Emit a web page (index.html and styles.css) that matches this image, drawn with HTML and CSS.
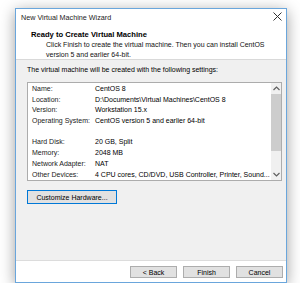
FILE: index.html
```html
<!DOCTYPE html>
<html lang="en">
<head>
	<meta charset="UTF-8">
	<title>New Virtual Machine Wizard</title>
	<link rel="stylesheet" href="styles.css">
</head>
<body>
	<div class="wizard">
		<div class="titlebar">
			<span class="title">New Virtual Machine Wizard</span>
			<svg class="close" width="9" height="9" viewBox="0 0 9 9">
				<path d="M0.5 0.5 L8.5 8.5 M8.5 0.5 L0.5 8.5" stroke="#333" stroke-width="1" fill="none"/>
			</svg>
		</div>

		<div class="header">
			<div class="heading">Ready to Create Virtual Machine</div>
			<div class="desc">Click Finish to create the virtual machine. Then you can install CentOS<br>version 5 and earlier 64-bit.</div>
		</div>

		<div class="content">
			<p class="intro">The virtual machine will be created with the following settings:</p>

			<div class="summary">
				<div class="rows">
					<div class="row"><span class="label">Name:</span><span>CentOS 8</span></div>
					<div class="row"><span class="label">Location:</span><span>D:\Documents\Virtual Machines\CentOS 8</span></div>
					<div class="row"><span class="label">Version:</span><span>Workstation 15.x</span></div>
					<div class="row"><span class="label">Operating System:</span><span>CentOS version 5 and earlier 64-bit</span></div>
					<div class="row"></div>
					<div class="row"><span class="label">Hard Disk:</span><span>20 GB, Split</span></div>
					<div class="row"><span class="label">Memory:</span><span>2048 MB</span></div>
					<div class="row"><span class="label">Network Adapter:</span><span>NAT</span></div>
					<div class="row"><span class="label">Other Devices:</span><span>4 CPU cores, CD/DVD, USB Controller, Printer, Sound...</span></div>
				</div>
				<div class="scrollbar">
					<div class="arrow">
						<svg width="7" height="5" viewBox="0 0 7 5"><path d="M0.5 4 L3.5 1 L6.5 4" stroke="#606060" stroke-width="1.2" fill="none"/></svg>
					</div>
					<div class="thumb"></div>
					<div class="track"></div>
					<div class="arrow">
						<svg width="7" height="5" viewBox="0 0 7 5"><path d="M0.5 1 L3.5 4 L6.5 1" stroke="#606060" stroke-width="1.2" fill="none"/></svg>
					</div>
				</div>
			</div>

			<button class="btn customize">Customize Hardware...</button>
		</div>

		<div class="footer">
			<button class="btn">&lt; Back</button>
			<button class="btn">Finish</button>
			<button class="btn">Cancel</button>
		</div>
	</div>
</body>
</html>
```

FILE: styles.css
```css
body {
	margin: 0;
	background-color: #fff;
	font-family: "Liberation Sans", Arial, sans-serif;
	font-size: 7px;
	color: #000;
}

.wizard {
	display: flex;
	flex-direction: column;
	box-sizing: border-box;
	width: 272px;
	height: 275px;
	margin: 8px 0 0 15px;
	border: 1px solid #6aa6dc;
	background-color: #fff;
	box-shadow: 0 3px 14px rgba(0, 0, 0, 0.38);
}

.titlebar {
	display: flex;
	align-items: center;
	justify-content: space-between;
	height: 17px;
	padding: 0 4px 0 5px;
}

.title {
	font-size: 7.2px;
	color: #222;
}

.close {
	margin-top: -2px;
}

.header {
	height: 34px;
	box-sizing: border-box;
	padding-top: 4px;
	border-bottom: 1px solid #d9d9d9;
	white-space: nowrap;
}

.heading {
	margin-left: 15px;
	font-size: 7.6px;
	font-weight: bold;
	line-height: 10px;
}

.desc {
	margin-left: 30px;
	line-height: 10px;
	color: #111;
}

.content {
	flex: 1;
	padding: 5px 4px 0 11px;
	background-color: #f0f0f0;
	border-bottom: 1px solid #dcdcdc;
}

.intro {
	margin: 0;
	line-height: 10px;
	white-space: nowrap;
}

.summary {
	display: flex;
	height: 99px;
	box-sizing: border-box;
	margin-top: 7px;
	border: 1px solid #acacac;
	background-color: #fff;
}

.rows {
	flex: 1;
	padding: 1px 0 0 4px;
	white-space: nowrap;
	overflow: hidden;
}

.row {
	display: flex;
	height: 10.7px;
	line-height: 10.7px;
}

.label {
	width: 63px;
	color: #222;
}

.scrollbar {
	display: flex;
	flex-direction: column;
	width: 10px;
	background-color: #f0f0f0;
}

.arrow {
	display: flex;
	align-items: center;
	justify-content: center;
	height: 11px;
}

.thumb {
	height: 57px;
	background-color: #cdcdcd;
}

.track {
	flex: 1;
}

.btn {
	box-sizing: border-box;
	height: 12px;
	padding: 0;
	border: 1px solid #adadad;
	background-color: #e1e1e1;
	font-family: inherit;
	font-size: 7px;
	color: #000;
}

.customize {
	display: block;
	width: 90px;
	height: 14px;
	margin-top: 9px;
	border-color: #0078d7;
}

.footer {
	display: flex;
	justify-content: flex-end;
	gap: 6px;
	padding: 5px 3px 0 0;
	height: 21px;
	box-sizing: border-box;
}

.footer .btn {
	width: 47px;
}
```
